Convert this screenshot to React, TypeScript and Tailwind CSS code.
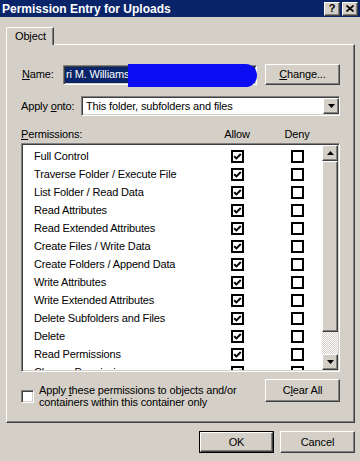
import React from "react";

const raised =
  "border border-t-white border-l-white border-r-[#404040] border-b-[#404040] shadow-[inset_-1px_-1px_0_#808080]";
const sunken =
  "border border-t-[#808080] border-l-[#808080] border-r-white border-b-white shadow-[inset_1px_1px_0_#404040,inset_-1px_-1px_0_#d4d0c8]";

const perms = [
  "Full Control",
  "Traverse Folder / Execute File",
  "List Folder / Read Data",
  "Read Attributes",
  "Read Extended Attributes",
  "Create Files / Write Data",
  "Create Folders / Append Data",
  "Write Attributes",
  "Write Extended Attributes",
  "Delete Subfolders and Files",
  "Delete",
  "Read Permissions",
  "Change Permissions",
];

function Box({ checked }: { checked: boolean }) {
  return (
    <div className="w-[13px] h-[13px] border-2 border-black bg-white flex items-center justify-center shrink-0">
      {checked && (
        <svg width="9" height="9" viewBox="0 0 9 9">
          <polyline points="1.2,4.2 3.4,6.4 7.8,2" fill="none" stroke="#000" strokeWidth="2" />
        </svg>
      )}
    </div>
  );
}

function Arrow({ up }: { up?: boolean }) {
  return (
    <svg width="7" height="4" viewBox="0 0 7 4">
      {up ? <polygon points="0,4 7,4 3.5,0" fill="#000" /> : <polygon points="0,0 7,0 3.5,4" fill="#000" />}
    </svg>
  );
}

export default function App() {
  return (
    <div className="w-[360px] h-[461px] bg-[#d4d0c8] flex flex-col text-[11px] leading-[13px] tracking-[-0.15px] text-black overflow-hidden font-['Liberation_Sans',Arial,sans-serif]">
      {/* Title bar */}
      <div className="h-[17px] bg-[#0a246a] flex items-center pl-[2px] shrink-0">
        <span className="text-white font-bold text-[12px] leading-[14px] tracking-normal">Permission Entry for Uploads</span>
        <div className="ml-auto flex gap-[2px] pr-[2px]">
          <div className={`w-[16px] h-[14px] bg-[#d4d0c8] ${raised} flex items-center justify-center`}>
            <span className="font-bold text-[11px] leading-[11px]">?</span>
          </div>
          <div className={`w-[16px] h-[14px] bg-[#d4d0c8] ${raised} flex items-center justify-center`}>
            <svg width="8" height="7" viewBox="0 0 8 7">
              <path d="M0.5 0.5 L7.5 6.5 M7.5 0.5 L0.5 6.5" stroke="#000" strokeWidth="1.6" />
            </svg>
          </div>
        </div>
      </div>

      {/* Tab */}
      <div className="pl-[6px] pt-[10px] shrink-0">
        <div className="relative z-10 w-[48px] h-[18px] -mb-[1px] bg-[#d4d0c8] border-t border-l border-t-white border-l-white border-r border-r-[#404040] shadow-[inset_-1px_0_0_#808080] rounded-tl-[2px] flex items-center pl-[8px]">
          Object
        </div>
      </div>

      {/* Panel */}
      <div className={`ml-[6px] w-[349px] h-[379px] shrink-0 ${raised} pt-[19px] px-[14px] flex flex-col`}>
        {/* Name row */}
        <div className="h-[21px] flex items-center">
          <span className="w-[42px] pl-[1px]">
            <u>N</u>ame:
          </span>
          <div className={`relative w-[194px] h-[20px] bg-white ${sunken} p-[1px]`}>
            <div className="w-full h-full bg-[#0a246a] text-white flex items-center pl-[1px]">ri M. Williams</div>
            <div className="absolute left-[64px] top-[-2px] w-[129px] h-[23px] rounded-r-full rounded-l-[40%] bg-[#0c0cf2] blur-[0.6px]" />
          </div>
          <div className={`ml-[8px] w-[75px] h-[21px] bg-[#d4d0c8] ${raised} flex items-center justify-center`}>
            <span>
              <u>C</u>hange...
            </span>
          </div>
        </div>

        {/* Apply onto */}
        <div className="mt-[11px] h-[20px] flex items-center">
          <span className="w-[60px]">
            Apply <u>o</u>nto:
          </span>
          <div className={`w-[259px] h-[20px] bg-white ${sunken} flex items-center`}>
            <span className="pl-[4px] flex-1">This folder, subfolders and files</span>
            <div className={`w-[16px] h-[16px] bg-[#d4d0c8] ${raised} flex items-center justify-center`}>
              <Arrow />
            </div>
          </div>
        </div>

        {/* Header */}
        <div className="mt-[11px] h-[14px] flex items-center">
          <span className="w-[196px]">
            <u>P</u>ermissions:
          </span>
          <span className="w-[40px] text-center">Allow</span>
          <span className="w-[20px]" />
          <span className="w-[40px] text-center">Deny</span>
        </div>

        {/* List */}
        <div className={`mt-[2px] h-[229px] bg-white ${sunken} p-[1px] flex`}>
          <div className="flex-1 overflow-hidden pt-[2px]">
            {perms.map((p) => (
              <div key={p} className="h-[18px] flex items-center pl-[11px]">
                <span className="w-[197px] whitespace-nowrap">{p}</span>
                <Box checked />
                <span className="w-[47px]" />
                <Box checked={false} />
              </div>
            ))}
          </div>
          <div className="w-[16px] flex flex-col">
            <div className={`h-[16px] bg-[#d4d0c8] ${raised} flex items-center justify-center`}>
              <Arrow up />
            </div>
            <div className={`h-[171px] bg-[#d4d0c8] ${raised}`} />
            <div className="flex-1 bg-[image:repeating-conic-gradient(#d4d0c8_0%_25%,#ffffff_0%_50%)] bg-[length:2px_2px]" />
            <div className={`h-[16px] bg-[#d4d0c8] ${raised} flex items-center justify-center`}>
              <Arrow />
            </div>
          </div>
        </div>

        {/* Bottom row */}
        <div className="mt-[7px] flex items-start justify-between">
          <div className="mt-[5px] flex items-center">
            <div className={`w-[13px] h-[13px] bg-white ${sunken}`} />
            <div className="ml-[5px] leading-[12px]">
              <div>
                Apply <u>t</u>hese permissions to objects and/or
              </div>
              <div>containers within this container only</div>
            </div>
          </div>
          <div className={`w-[75px] h-[23px] bg-[#d4d0c8] ${raised} flex items-center justify-center`}>
            <span>
              C<u>l</u>ear All
            </span>
          </div>
        </div>
      </div>

      {/* OK / Cancel */}
      <div className="mt-[8px] flex justify-end gap-[6px] pr-[5px]">
        <div className="w-[75px] h-[22px] border border-black">
          <div className={`w-full h-full bg-[#d4d0c8] ${raised} flex items-center justify-center`}>OK</div>
        </div>
        <div className={`w-[75px] h-[22px] bg-[#d4d0c8] ${raised} flex items-center justify-center`}>Cancel</div>
      </div>
    </div>
  );
}
